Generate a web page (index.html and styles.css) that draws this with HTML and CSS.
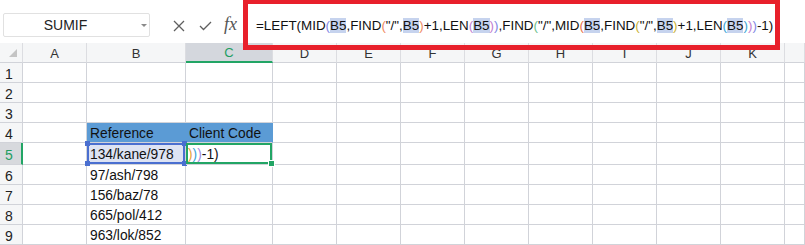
FILE: index.html
```html
<!DOCTYPE html>
<html>
<head>
<meta charset="utf-8">
<link rel="stylesheet" href="styles.css">
</head>
<body>
<div class="app">
  <div class="topbar">
    <div class="namebox"><span class="nb-text">SUMIF</span><span class="nb-arrow"></span></div>
    <div class="fx-icons">
      <svg class="ico-x" width="12" height="12" viewBox="0 0 12 12"><path d="M1 1 L11 11 M11 1 L1 11" stroke="#5f5f5f" stroke-width="1.3" fill="none"/></svg>
      <svg class="ico-check" width="13" height="10" viewBox="0 0 13 10"><path d="M1 5 L4.5 8.5 L12 1" stroke="#5f5f5f" stroke-width="1.3" fill="none"/></svg>
      <span class="fx">fx</span>
    </div>
    <div class="formula">=LEFT(MID<span class="pa">(</span><span class="ref">B5</span>,FIND<span class="pb">(</span>"/",<span class="ref">B5</span><span class="pb">)</span>+1,LEN<span class="pc">(</span><span class="ref">B5</span><span class="pc">)</span><span class="pa">)</span>,FIND<span class="pd">(</span>"/",MID<span class="pg">(</span><span class="ref">B5</span>,FIND<span class="pe">(</span>"/",<span class="ref">B5</span><span class="pe">)</span>+1,LEN<span class="pf">(</span><span class="ref">B5</span><span class="pf">)</span><span class="pc">)</span><span class="pa">)</span>-1)</div>
  </div>
  <div class="annot"></div>
  <div class="sheet">
    <div class="ch corner"><span class="tri"></span></div>
    <div class="ch">A</div><div class="ch">B</div><div class="ch ch-sel">C</div><div class="ch">D</div><div class="ch">E</div><div class="ch">F</div><div class="ch">G</div><div class="ch">H</div><div class="ch">I</div><div class="ch">J</div><div class="ch">K</div><div class="ch"></div>

    <div class="rh">1</div><div class="c"></div><div class="c"></div><div class="c"></div><div class="c"></div><div class="c"></div><div class="c"></div><div class="c"></div><div class="c"></div><div class="c"></div><div class="c"></div><div class="c"></div><div class="c"></div>
    <div class="rh">2</div><div class="c"></div><div class="c"></div><div class="c"></div><div class="c"></div><div class="c"></div><div class="c"></div><div class="c"></div><div class="c"></div><div class="c"></div><div class="c"></div><div class="c"></div><div class="c"></div>
    <div class="rh">3</div><div class="c"></div><div class="c"></div><div class="c"></div><div class="c"></div><div class="c"></div><div class="c"></div><div class="c"></div><div class="c"></div><div class="c"></div><div class="c"></div><div class="c"></div><div class="c"></div>
    <div class="rh">4</div><div class="c"></div><div class="c hd">Reference</div><div class="c hd">Client Code</div><div class="c"></div><div class="c"></div><div class="c"></div><div class="c"></div><div class="c"></div><div class="c"></div><div class="c"></div><div class="c"></div><div class="c"></div>
    <div class="rh rh-sel">5</div><div class="c"></div><div class="c b5">134/kane/978<span class="h tl"></span><span class="h tr"></span><span class="h bl"></span><span class="h br"></span></div><div class="c c5"><span class="q1">)</span><span class="q2">)</span><span class="q3">)</span>-1)<span class="gh"></span></div><div class="c"></div><div class="c"></div><div class="c"></div><div class="c"></div><div class="c"></div><div class="c"></div><div class="c"></div><div class="c"></div><div class="c"></div>
    <div class="rh">6</div><div class="c"></div><div class="c">97/ash/798</div><div class="c"></div><div class="c"></div><div class="c"></div><div class="c"></div><div class="c"></div><div class="c"></div><div class="c"></div><div class="c"></div><div class="c"></div><div class="c"></div>
    <div class="rh">7</div><div class="c"></div><div class="c">156/baz/78</div><div class="c"></div><div class="c"></div><div class="c"></div><div class="c"></div><div class="c"></div><div class="c"></div><div class="c"></div><div class="c"></div><div class="c"></div><div class="c"></div>
    <div class="rh">8</div><div class="c"></div><div class="c">665/pol/412</div><div class="c"></div><div class="c"></div><div class="c"></div><div class="c"></div><div class="c"></div><div class="c"></div><div class="c"></div><div class="c"></div><div class="c"></div><div class="c"></div>
    <div class="rh">9</div><div class="c"></div><div class="c">963/lok/852</div><div class="c"></div><div class="c"></div><div class="c"></div><div class="c"></div><div class="c"></div><div class="c"></div><div class="c"></div><div class="c"></div><div class="c"></div><div class="c"></div>
  </div>
</div>
</body>
</html>
```
FILE: styles.css
```css
* { box-sizing: border-box; }
html, body { margin: 0; padding: 0; }
body {
  width: 805px;
  height: 245px;
  overflow: hidden;
  background: #ffffff;
  font-family: "Liberation Sans", Arial, sans-serif;
  color: #1a1a1a;
}
.app { position: relative; width: 805px; height: 245px; }

.topbar {
  height: 43px;
  display: flex;
  align-items: flex-start;
  background: #ffffff;
}
.namebox {
  margin: 13px 0 0 3px;
  width: 147px;
  height: 24px;
  border: 1px solid #e1e1e1;
  border-radius: 2px;
  display: flex;
  align-items: center;
}
.nb-text {
  flex: 1;
  text-align: center;
  padding-right: 14px;
  font-size: 14px;
  color: #222;
}
.nb-arrow {
  width: 0;
  height: 0;
  border-left: 3px solid transparent;
  border-right: 3px solid transparent;
  border-top: 3px solid #8a8a8a;
  margin-right: 2px;
}
.fx-icons {
  display: flex;
  align-items: center;
  margin: 18px 0 0 23px;
  height: 13px;
}
.ico-x { margin-top: 2px; }
.ico-check { margin-left: 14px; margin-top: 2px; }
.fx {
  margin-left: 12px;
  font-family: "Liberation Serif", serif;
  font-style: italic;
  font-size: 18px;
  color: #555;
  line-height: 13px;
}
.formula {
  margin: 18px 0 0 19px;
  font-size: 13.4px;
  line-height: 15px;
  white-space: nowrap;
  color: #111;
}
.ref { background: #c6d3ee; }
.pa { color: #8286e4; }
.pb { color: #ef8a62; }
.pc { color: #c27fd1; }
.pd { color: #6bbf8c; }
.pe { color: #c9b238; }
.pf { color: #3aa5d5; }
.pg { color: #e8734a; }

.annot {
  position: absolute;
  left: 243px;
  top: -1px;
  width: 537px;
  height: 51px;
  border: 5px solid #e8202b;
  pointer-events: none;
}

.sheet {
  display: grid;
  grid-template-columns: 23px 64px 99px 87px repeat(8, 64px) 20px;
  grid-template-rows: 20px 20px 20px 20px 20px 22px 20px 20px 20px 20px;
}
.ch {
  background: #f5f6f7;
  border-right: 1px solid #dcdde1;
  border-bottom: 1px solid #d1d3d9;
  display: flex;
  align-items: center;
  justify-content: center;
  font-size: 13px;
  color: #333;
  padding-top: 1px;
}
.corner { position: relative; }
.tri {
  position: absolute;
  right: 5px;
  bottom: 5px;
  width: 0;
  height: 0;
  border-left: 8px solid transparent;
  border-bottom: 8px solid #c4c4c4;
}
.ch-sel {
  background: #d4d7dd;
  color: #1f9e62;
  border-bottom: 2px solid #22a565;
}
.rh {
  background: #f5f6f7;
  border-right: 1px solid #d1d3d9;
  border-bottom: 1px solid #d1d3d9;
  display: flex;
  align-items: center;
  padding-left: 5px;
  padding-top: 2px;
  font-size: 14px;
  color: #222;
}
.rh-sel {
  background: #d7d9dd;
  color: #1f9e62;
  border-right: 2px solid #22a565;
}
.c {
  border-right: 1px solid #d1d3d9;
  border-bottom: 1px solid #d1d3d9;
  display: flex;
  align-items: center;
  padding-left: 3px;
  padding-top: 2px;
  font-size: 13.8px;
  white-space: nowrap;
  color: #111;
}
.hd { background: #5b9bd5; border-right-color: #5b9bd5; }
.b5 {
  position: relative;
  background: #dde3f3;
  box-shadow: inset 0 0 0 2px #4a6fd0;
}
.h {
  position: absolute;
  width: 5px;
  height: 5px;
  background: #4a6fd0;
}
.tl { left: -2px; top: -2px; }
.tr { right: -2px; top: -2px; }
.bl { left: -2px; bottom: -2px; }
.br { right: -2px; bottom: -2px; }
.c5 {
  position: relative;
  box-shadow: inset 0 0 0 2px #22a565;
  padding-left: 2px;
}
.gh {
  position: absolute;
  right: -3px;
  bottom: -3px;
  width: 5px;
  height: 5px;
  background: #22a565;
  border: 1px solid #ffffff;
  box-sizing: content-box;
}
.q1 { color: #e4a23a; }
.q2 { color: #3aa5d5; }
.q3 { color: #a28be0; }
```
